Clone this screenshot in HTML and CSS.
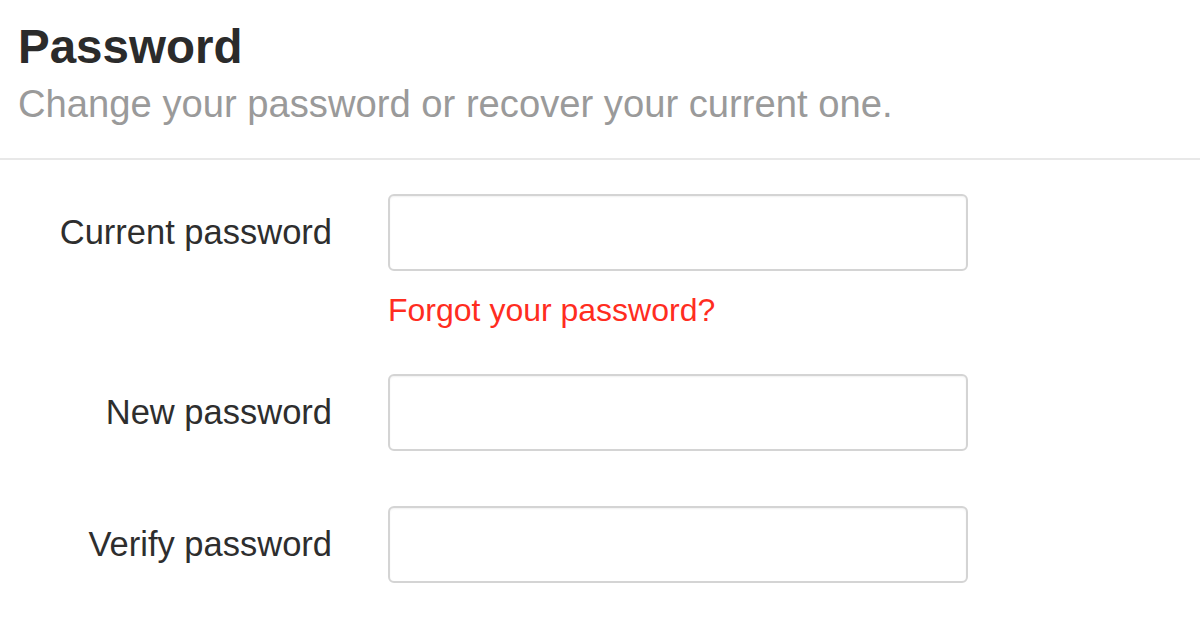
FILE: index.html
```html
<!DOCTYPE html>
<html lang="en">
<head>
    <meta charset="UTF-8">
    <meta name="viewport" content="width=device-width, initial-scale=1.0">
    <title>Password</title>
    <link rel="stylesheet" href="styles.css">
</head>
<body>
    <div class="header">
        <h1>Password</h1>
        <p class="subtitle">Change your password or recover your current one.</p>
    </div>

    <form class="password-form">
        <div class="row with-help">
            <label for="current">Current password</label>
            <div class="field">
                <input type="password" id="current">
                <a href="#" class="help">Forgot your password?</a>
            </div>
        </div>

        <div class="row">
            <label for="new">New password</label>
            <div class="field">
                <input type="password" id="new">
            </div>
        </div>

        <div class="row">
            <label for="verify">Verify password</label>
            <div class="field">
                <input type="password" id="verify">
            </div>
        </div>
    </form>
</body>
</html>
```

FILE: styles.css
```css
* {
    margin: 0;
    padding: 0;
    box-sizing: border-box;
    font-family: "Liberation Sans", Arial, Helvetica, sans-serif;
}

body {
    background: #fff;
    color: #333;
}

.header {
    padding: 21px 18px 32px;
    border-bottom: 2px solid #e8e8e8;
}

h1 {
    font-size: 47.5px;
    line-height: 52px;
    font-weight: bold;
    color: #2b2b2b;
}

.subtitle {
    margin-top: 9px;
    font-size: 38.2px;
    line-height: 44px;
    color: #9a9a9a;
}

.password-form {
    padding: 34px 18px 0;
}

.row {
    display: grid;
    grid-template-columns: 314px 580px;
    column-gap: 56px;
    align-items: start;
    margin-bottom: 55px;
}

.row.with-help {
    margin-bottom: 50px;
}

.row label {
    text-align: right;
    font-size: 34.5px;
    line-height: 77px;
    color: #2e2e2e;
}

.field input {
    display: block;
    width: 580px;
    height: 77px;
    border: 2px solid #d4d4d4;
    border-radius: 6px;
    background: #fff;
    box-shadow: inset 0 1px 2px rgba(0, 0, 0, 0.06);
    outline: none;
}

.help {
    display: block;
    margin-top: 25px;
    font-size: 32px;
    line-height: 28px;
    color: #ff2d1f;
    text-decoration: none;
}
```
